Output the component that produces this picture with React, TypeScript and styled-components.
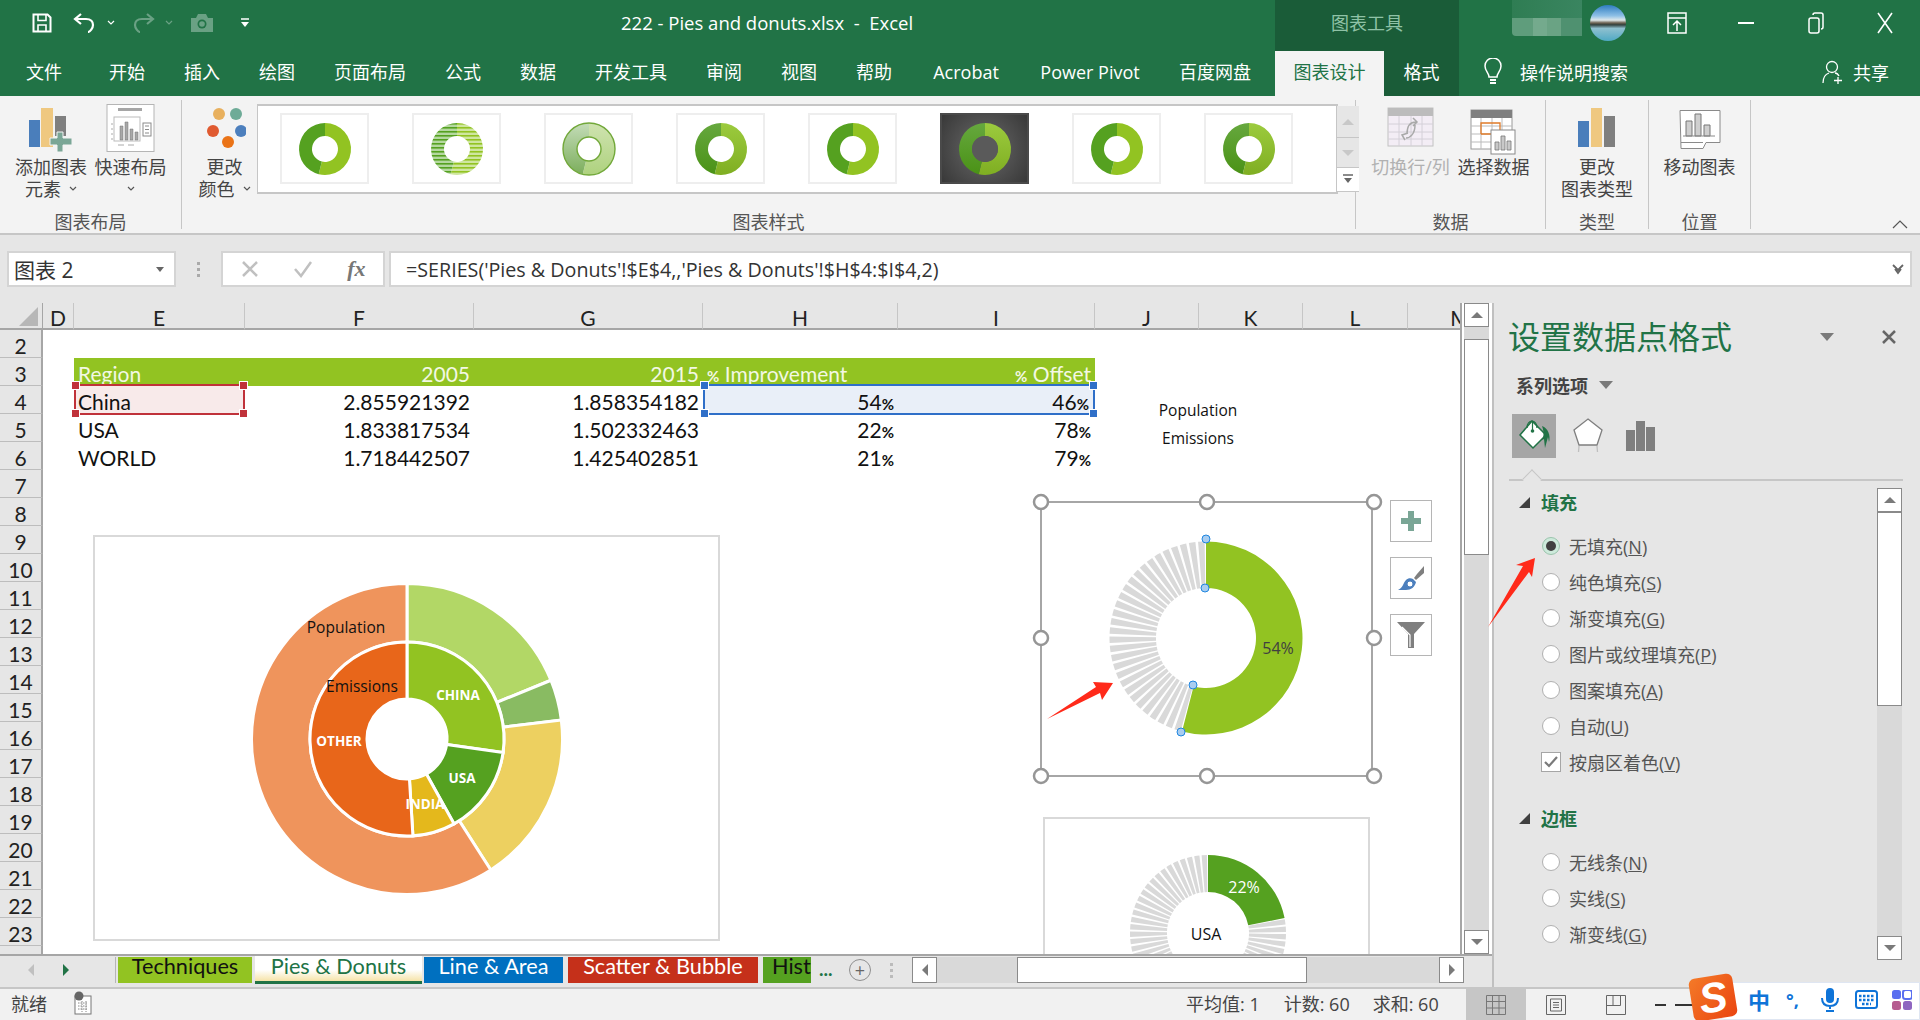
import React from "react";
import styled, {createGlobalStyle} from "styled-components";

const UI_FONT = `"Open Sans", "Noto Sans CJK SC", sans-serif`;
const SHEET_FONT = `Lato, "Noto Sans CJK SC", sans-serif`;
const GREEN = "#217346";

const polar = (cx: number, cy: number, r: number, a: number) => {
  const t = ((a - 90) * Math.PI) / 180;
  return [cx + r * Math.cos(t), cy + r * Math.sin(t)];
};

const arc = (cx: number, cy: number, r0: number, r1: number, a0: number, a1: number) => {
  const large = a1 - a0 > 180 ? 1 : 0;
  const [x0, y0] = polar(cx, cy, r1, a0);
  const [x1, y1] = polar(cx, cy, r1, a1);
  const [x2, y2] = polar(cx, cy, r0, a1);
  const [x3, y3] = polar(cx, cy, r0, a0);
  return `M${x0} ${y0}A${r1} ${r1} 0 ${large} 1 ${x1} ${y1}L${x2} ${y2}A${r0} ${r0} 0 ${large} 0 ${x3} ${y3}Z`;
};

const Stripes: React.FC<{cx: number; cy: number; r0: number; r1: number; start: number}> = ({cx, cy, r0, r1, start}) => {
  const count = Math.round((360 - start) / 5.5);
  const step = (360 - start) / count;
  return (
    <g fill="#d9d9d9">
      {Array.from({length: count}, (_, i) => (
        <path key={i} d={arc(cx, cy, r0, r1, start + i * step + 0.8, start + (i + 1) * step - 0.8)}/>
      ))}
    </g>
  );
};

/* ---------- ribbon thumbs ---------- */

type ThumbKind = "flat" | "lines" | "glass" | "shade" | "dark";

const thumbs: {id: string; kind: ThumbKind}[] = [
  {id: "a", kind: "flat"},
  {id: "b", kind: "lines"},
  {id: "c", kind: "glass"},
  {id: "d", kind: "shade"},
  {id: "e", kind: "flat"},
  {id: "f", kind: "dark"},
  {id: "g", kind: "flat"},
  {id: "h", kind: "shade"},
];

const ThumbDonut: React.FC<{id: string; kind: ThumbKind}> = ({id, kind}) => {
  const cx = 43;
  const cy = 34;
  const dark = kind === "dark";
  const light = kind === "glass" ? `url(#${id}l)` : kind === "lines" ? `url(#${id}pl)` : kind === "shade" || dark ? `url(#${id}l)` : "#92c322";
  const deep = kind === "glass" ? `url(#${id}d)` : kind === "lines" ? `url(#${id}pd)` : kind === "shade" || dark ? `url(#${id}d)` : "#55a120";
  return (
    <svg width="85" height="67" viewBox="0 0 85 67">
      <defs>
        <linearGradient id={`${id}l`} x1="0" y1="0" x2="0" y2="1">
          <stop offset="0" stopColor={kind === "glass" ? "#cfe3b0" : "#9ccb3e"}/>
          <stop offset="1" stopColor={kind === "glass" ? "#aed27e" : "#7fae22"}/>
        </linearGradient>
        <linearGradient id={`${id}d`} x1="0" y1="0" x2="0" y2="1">
          <stop offset="0" stopColor={kind === "glass" ? "#c4dcb8" : "#66a83e"}/>
          <stop offset="1" stopColor={kind === "glass" ? "#7cae5c" : "#4a9216"}/>
        </linearGradient>
        <pattern id={`${id}pl`} width="4" height="4" patternUnits="userSpaceOnUse">
          <rect width="4" height="4" fill="#cfe6a0"/>
          <rect width="4" height="1.6" fill="#92c322"/>
        </pattern>
        <pattern id={`${id}pd`} width="4" height="4" patternUnits="userSpaceOnUse">
          <rect width="4" height="4" fill="#b5d8a0"/>
          <rect width="4" height="1.6" fill="#55a120"/>
        </pattern>
      </defs>
      <path d={arc(cx, cy, kind === "glass" ? 12 : 13, 26, 0, 194)} fill={light}/>
      <path d={arc(cx, cy, kind === "glass" ? 12 : 13, 26, 194, 360)} fill={deep}/>
      {kind === "glass" && <circle cx={cx} cy={cy} r="26" fill="none" stroke="#72a83a" strokeWidth="1.4"/>}
      {kind === "glass" && <circle cx={cx} cy={cy} r="12" fill="none" stroke="#72a83a" strokeWidth="1.4"/>}
      {dark && <circle cx={cx} cy={cy} r="13" fill="#5a5a5a"/>}
    </svg>
  );
};

/* ---------- small icons ---------- */

const Chevron: React.FC<{color?: string}> = ({color = "#555"}) => (
  <svg width="8" height="6" viewBox="0 0 8 6"><path d="M1 1l3 3 3-3" fill="none" stroke={color} strokeWidth="1.2"/></svg>
);

const AddElementIcon = () => (
  <svg width="48" height="52" viewBox="0 0 48 52">
    <rect x="2" y="16" width="11" height="27" fill="#4a7ebb"/>
    <rect x="14" y="4" width="12" height="39" fill="#efc880"/>
    <rect x="28" y="12" width="11" height="20" fill="#7f7f7f"/>
    <path d="M30 28h6v6h9v7h-9v7h-6v-7h-7v-7h7z" fill="#7aa696" stroke="#f3f3f3"/>
  </svg>
);

const QuickLayoutIcon = () => (
  <svg width="50" height="52" viewBox="0 0 50 52">
    <rect x="1" y="0.5" width="47" height="47" fill="#fff" stroke="#b5b5b5"/>
    <rect x="12" y="4" width="24" height="3" fill="#a6a6a6"/>
    <rect x="8" y="13" width="26" height="24" fill="none" stroke="#bbb"/>
    <path d="M14 36V22h3v14zM19 36V18h3v18zM24 36V25h3v11zM29 36V28h3v8z" fill="#a8a8a8" stroke="#777" strokeWidth=".5"/>
    <rect x="37" y="19" width="8" height="13" fill="#fff" stroke="#8a8a8a"/>
    <path d="M39 22h4M39 25.500h4M39 29h4" stroke="#8a8a8a"/>
    <path d="M5 20h2M5 25h2M5 30h2M5 35h2M12 41h6M22 41h6" stroke="#aaa"/>
  </svg>
);

const PaletteIcon = () => (
  <svg width="42" height="52" viewBox="0 0 42 52">
    <circle cx="15" cy="10" r="6" fill="#e8b05e"/>
    <circle cx="32" cy="10" r="6" fill="#6eab97"/>
    <circle cx="9" cy="27" r="6" fill="#e05a30"/>
    <circle cx="37" cy="27" r="6" fill="#4c7fbd"/>
    <circle cx="24" cy="38" r="6" fill="#ea7317"/>
  </svg>
);

const SwitchIcon = () => (
  <svg width="48" height="52" viewBox="0 0 48 52">
    <rect x="1" y="4" width="45" height="38" fill="#f3edf5" stroke="#c2c2c2"/>
    <rect x="1" y="4" width="45" height="8" fill="#bcbcbc"/>
    <path d="M12 12v30M24 12v30M35 12v30M1 20h45M1 28h45M1 35h45" stroke="#d4d0d8"/>
    <path d="M20 30c0-9 4-12 9-12M26 14l4 4-4 4M28 21c0 9-5 13-9 13M21 29l-6 2 3 5" fill="none" stroke="#a9a9a9" strokeWidth="1.500"/>
  </svg>
);

const SelectDataIcon = () => (
  <svg width="48" height="52" viewBox="0 0 48 52">
    <rect x="1" y="6" width="41" height="39" fill="#fff" stroke="#9a9a9a"/>
    <rect x="1" y="6" width="41" height="8" fill="#7f7f7f"/>
    <path d="M11 14v31M22 14v31M32 14v31M1 22h41M1 30h41M1 38h41" stroke="#bbb"/>
    <path d="M11 30V19h19v11M11 30h11" fill="none" stroke="#e07b28" strokeWidth="1.300"/>
    <rect x="21" y="26" width="24" height="24" fill="#fff" stroke="#8a8a8a"/>
    <path d="M25 46V38h4v8zM31 46V32h4v14zM37 46V37h4v9z" fill="#c8c8c8" stroke="#777" strokeWidth=".8"/>
  </svg>
);

const ChangeTypeIcon = () => (
  <svg width="40" height="52" viewBox="0 0 40 52">
    <rect x="1" y="17" width="11" height="26" fill="#4a7ebb"/>
    <rect x="14" y="4" width="11" height="39" fill="#efc880"/>
    <rect x="27" y="12" width="11" height="31" fill="#7f7f7f"/>
  </svg>
);

const MoveChartIcon = () => (
  <svg width="44" height="52" viewBox="0 0 44 52">
    <path d="M2 6.500h40v32H28l-3 6H3z" fill="#fff" stroke="#8a8a8a"/>
    <path d="M3 38.500h22" stroke="#8a8a8a"/>
    <path d="M8 32V17h6v15zM17 32V10h6v22zM26 32V21h6v11z" fill="#cfcfcf" stroke="#777"/>
    <path d="M5 32h32" stroke="#8a8a8a"/>
  </svg>
);

const BucketIcon = () => (
  <svg width="34" height="36" viewBox="0 0 34 36">
    <path d="M15 3l14 14-13 13L3 17z" fill="#fff" stroke={GREEN} strokeWidth="1.500"/>
    <path d="M10 10c0-9 10-9 10 0v0" fill="none" stroke={GREEN} strokeWidth="1.300"/>
    <path d="M15.500 4v8" stroke={GREEN} strokeWidth="1.200"/>
    <circle cx="15.500" cy="13" r="1.800" fill={GREEN}/>
    <path d="M25 8c6 2 9 10 7 16l-1-5-3 11-1-9-2 1c2-3 2-9 0-14z" fill={GREEN}/>
  </svg>
);

const PentagonIcon = () => (
  <svg width="32" height="38" viewBox="0 0 32 38">
    <path d="M16 2l14 11-5 15H7L2 13z" fill="#fff" stroke="#7f7f7f" strokeWidth="1.300"/>
    <path d="M7 29l-.5 6M25 29l.5 6" stroke="#bfbfbf" strokeWidth="1.300"/>
  </svg>
);

const BarsIcon = () => (
  <svg width="30" height="32" viewBox="0 0 30 32">
    <path d="M0 10h9v21H0zM10 1h9v30h-9zM20 7h9v24h-9z" fill="#7f7f7f"/>
  </svg>
);

/* ---------- page ---------- */

const GlobalStyle = createGlobalStyle`
  html, body {
    margin: 0;
    padding: 0;
    background: #fff;
    overflow: hidden;
  }
  * { box-sizing: border-box; }
`;

const Window = styled.div`
  position: relative;
  width: 1920px;
  height: 1020px;
  display: flex;
  flex-direction: column;
  overflow: hidden;
  font-family: ${UI_FONT};
  font-size: 18px;
  color: #444;
`;

const TitleBar = styled.header`
  height: 51px;
  flex: none;
  display: flex;
  align-items: stretch;
  background: ${GREEN};
  color: #fff;
`;

const QuickAccess = styled.div`
  width: 621px;
  flex: none;
  display: flex;
  align-items: center;
  padding: 0 0 5px 32px;
`;

const QatItem = styled.span<{$ml?: number}>`
  display: flex;
  margin-left: ${({$ml}) => $ml ?? 0}px;
`;

const DocTitle = styled.div`
  width: 654px;
  flex: none;
  font-size: 18.500px;
  line-height: 46px;
  white-space: pre;
`;

const ToolsLabel = styled.div`
  width: 184px;
  flex: none;
  background: #1a5c38;
  color: #8fc2a6;
  text-align: center;
  line-height: 47px;
`;

const BlurredName = styled.div`
  width: 70px;
  height: 36px;
  margin-left: 53px;
  flex: none;
  border-radius: 0 0 0 4px;
  background:
    linear-gradient(90deg, #5f9d7c 0 30%, #74aa8d 30% 50%, #6aa384 50% 70%, #4f9170 70% 100%) bottom / 100% 50% no-repeat,
    linear-gradient(90deg, #2f7d53, #3a8560);
`;

const Avatar = styled.div`
  width: 36px;
  height: 36px;
  margin: 5px 0 0 8px;
  flex: none;
  border-radius: 50%;
  background: linear-gradient(180deg, #2d7cc0 0%, #8ec0e6 30%, #dfe8ea 42%, #6b5f4e 50%, #33423f 55%, #8fc0cf 65%, #4fa9c4 100%);
`;

const WindowControls = styled.div`
  display: flex;
  flex: none;
  margin-left: 16px;
  padding-bottom: 5px;
`;

const WinButton = styled.span`
  width: 69.500px;
  flex: none;
  display: flex;
  align-items: center;
  justify-content: center;
`;

const TabBar = styled.nav`
  height: 45px;
  flex: none;
  display: flex;
  align-items: stretch;
  background: ${GREEN};
  color: #fff;
  padding-left: 6.500px;
`;

const Tab = styled.div<{$w: number; $gap?: number; $active?: boolean; $tool?: boolean}>`
  width: ${({$w}) => $w}px;
  margin-right: ${({$gap}) => $gap ?? 0}px;
  flex: none;
  text-align: center;
  line-height: 42px;
  white-space: nowrap;
  background: ${({$active, $tool}) => ($active ? "#f3f3f3" : $tool ? "#1a5c38" : "transparent")};
  color: ${({$active}) => ($active ? GREEN : "#fff")};
`;

const TellMe = styled.div`
  display: flex;
  align-items: center;
  gap: 18px;
  margin-left: 25px;
  padding-bottom: 3px;
`;

const ShareBox = styled.div`
  display: flex;
  align-items: center;
  gap: 9px;
  margin-left: 194px;
  padding-bottom: 3px;
`;

const Ribbon = styled.section`
  height: 139px;
  flex: none;
  display: flex;
  background: #f3f3f3;
  border-bottom: 2px solid #c6c6c6;
  color: #444;
`;

const Group = styled.div<{$w: number}>`
  width: ${({$w}) => $w}px;
  height: 129px;
  margin-top: 4px;
  flex: none;
  display: flex;
  flex-direction: column;
  border-right: 1px solid #c6c6c6;
`;

const GroupBody = styled.div<{$pl?: number}>`
  flex: 1;
  min-height: 0;
  display: flex;
  padding: 4px 0 0 ${({$pl}) => $pl ?? 0}px;
`;

const GroupLabel = styled.div`
  height: 24px;
  margin-bottom: -5px;
  line-height: 24px;
  text-align: center;
  color: #555;
`;

const RibbonButton = styled.div<{$w: number; $muted?: boolean}>`
  width: ${({$w}) => $w}px;
  flex: none;
  display: flex;
  flex-direction: column;
  align-items: center;
  line-height: 22px;
  white-space: nowrap;
  color: ${({$muted}) => ($muted ? "#b1b1b1" : "#444")};
`;

const IconSlot = styled.div`
  height: 52px;
  display: flex;
  justify-content: center;
`;

const ButtonLine = styled.div`
  height: 22px;
  display: flex;
  align-items: center;
  gap: 8px;
`;

const Gallery = styled.div`
  width: 1081px;
  height: 90px;
  flex: none;
  display: flex;
  padding: 7px 0 0 22px;
  background: #fff;
  border: 1px solid #c6c6c6;
  border-width: 2px 2px 2px 1px;
`;

const Thumb = styled.div<{$dark?: boolean}>`
  width: 89px;
  height: 71px;
  margin-right: 43px;
  flex: none;
  display: flex;
  align-items: center;
  justify-content: center;
  border: 2px solid ${({$dark}) => ($dark ? "#4a4a4a" : "#eeeeee")};
  background: ${({$dark}) => ($dark ? "radial-gradient(circle, #6a6a6a, #383838)" : "#fff")};
`;

const GalleryScroll = styled.div`
  margin: -7px -1px 0 auto;
  width: 23px;
  flex: none;
  display: flex;
  flex-direction: column;
  border-left: 1px solid #c6c6c6;
`;

const GalleryStep = styled.div<{$h: number; $off?: boolean}>`
  height: ${({$h}) => $h}px;
  display: flex;
  align-items: center;
  justify-content: center;
  background: ${({$off}) => ($off ? "#e6e6e6" : "#fff")};
  border-bottom: 1px solid #c6c6c6;
  color: ${({$off}) => ($off ? "#bdbdbd" : "#666")};
`;

const Collapse = styled.div`
  flex: 1;
  display: flex;
  justify-content: flex-end;
  align-items: flex-end;
  padding: 0 12px 4px 0;
`;

const FormulaBar = styled.div`
  height: 68px;
  flex: none;
  display: flex;
  align-items: flex-start;
  padding: 16px 8px 0 7px;
  background: #e6e6e6;
`;

const InputBox = styled.div<{$w?: number; $ml?: number}>`
  width: ${({$w}) => ($w ? `${$w}px` : "auto")};
  flex: ${({$w}) => ($w ? "none" : "1")};
  margin-left: ${({$ml}) => $ml ?? 0}px;
  height: 36px;
  display: flex;
  align-items: center;
  background: #fff;
  border: 2px solid #d4d4d4;
  svg { flex: none; }
`;

const NameText = styled.span`
  flex: 1;
  padding-left: 5px;
  font-size: 21px;
  color: #333;
`;

const NameCaret = styled.svg`
  margin-right: 10px;
`;

const Grip = styled.div`
  width: 45px;
  height: 36px;
  flex: none;
  display: flex;
  flex-direction: column;
  align-items: center;
  justify-content: center;
  gap: 3px;
  span {
    width: 3px;
    height: 3px;
    background: #aaa;
  }
`;

const FxSlot = styled.span<{$w: number}>`
  width: ${({$w}) => $w}px;
  display: flex;
  justify-content: center;
`;

const FxLabel = styled.span`
  font-family: "Liberation Serif", serif;
  font-style: italic;
  font-weight: 700;
  font-size: 22px;
  color: #777;
`;

const FormulaText = styled.span`
  flex: 1;
  padding-left: 15px;
  font-size: 19.700px;
  color: #333;
  white-space: pre;
`;

const FormulaCaret = styled.svg`
  margin-right: 6px;
`;

const Main = styled.div`
  height: 684px;
  flex: none;
  display: flex;
`;

const SheetColumn = styled.div`
  width: 1492px;
  flex: none;
  display: flex;
  flex-direction: column;
`;

const SheetRow = styled.div`
  flex: 1;
  min-height: 0;
  display: flex;
`;

const Sheet = styled.div`
  position: relative;
  width: 1462px;
  flex: none;
  overflow: hidden;
  background: #fff;
  border-right: 2px solid #a6a6a6;
`;

const Grid = styled.div`
  display: grid;
  grid-template-columns: 43px 31px 171px 229px 229px 195px 197px 104px 104px 105px 105px;
  grid-template-rows: 27px;
  grid-auto-rows: 28px;
  font-family: ${SHEET_FONT};
  font-size: 21px;
  color: #111;
`;

const Corner = styled.div`
  position: relative;
  background: #e6e6e6;
  border-right: 1px solid #a6a6a6;
  border-bottom: 2px solid #a6a6a6;
  &::after {
    content: "";
    position: absolute;
    right: 4px;
    bottom: 2px;
    border-style: solid;
    border-width: 0 0 19px 19px;
    border-color: transparent transparent #b7b7b7 transparent;
  }
`;

const ColHead = styled.div`
  background: #e6e6e6;
  border-right: 1px solid #c6c6c6;
  border-bottom: 2px solid #a6a6a6;
  text-align: center;
  line-height: 27px;
  color: #222;
  padding-top: 1px;
`;

const RowHead = styled.div`
  background: #e6e6e6;
  border-right: 2px solid #a6a6a6;
  border-bottom: 1px solid #bdbdbd;
  text-align: center;
  line-height: 32px;
  color: #222;
`;

type Frame = "all" | "start" | "end";

const Cell = styled.div<{$align?: "left" | "right"; $head?: boolean; $frame?: Frame; $tint?: string; $line?: string}>`
  position: relative;
  padding: ${({$head}) => ($head ? "2px" : "0")} 4px 0;
  line-height: ${({$head}) => ($head ? 28 : 31)}px;
  white-space: nowrap;
  text-align: ${({$align}) => $align ?? "left"};
  color: ${({$head}) => ($head ? "#f3f8e4" : "inherit")};
  background: ${({$head, $tint}) => ($head ? "#92c322" : $tint ?? "transparent")};
  ${({$frame, $line}) => $frame && `
    border-top: 2px solid ${$line};
    border-bottom: 2px solid ${$line};
    margin-top: -2px;
    height: 31px;
    line-height: 32px;
    padding-left: ${$frame === "all" ? 2 : 4}px;
    border-left: ${$frame !== "end" ? `2px solid ${$line}` : "0"};
    border-right: ${$frame !== "start" ? `2px solid ${$line}` : "0"};
  `}
`;

const Corners = styled.i<{$x: "left" | "right"; $y: "top" | "bottom"; $c: string}>`
  position: absolute;
  ${({$x}) => $x}: -4px;
  ${({$y}) => $y}: -4px;
  width: 7px;
  height: 7px;
  background: ${({$c}) => $c};
  box-shadow: 0 0 0 1px #fff;
  z-index: 2;
`;

const TinyPct = styled.span`
  font-size: 15px;
  font-weight: 700;
`;

const ChartFrame = styled.div<{$x: number; $y: number; $w: number; $h: number; $line: string}>`
  position: absolute;
  left: ${({$x}) => $x}px;
  top: ${({$y}) => $y}px;
  width: ${({$w}) => $w}px;
  height: ${({$h}) => $h}px;
  background: #fff;
  border: 2px solid ${({$line}) => $line};
  svg {
    position: absolute;
    left: 0;
    top: 0;
    overflow: visible;
    font-family: ${UI_FONT};
  }
`;

const FloatLabel = styled.div<{$y: number}>`
  position: absolute;
  left: 1120px;
  top: ${({$y}) => $y}px;
  width: 156px;
  text-align: center;
  font-size: 15.500px;
  line-height: 20px;
  color: #111;
`;

const ChartTool = styled.div<{$y: number}>`
  position: absolute;
  left: 1390px;
  top: ${({$y}) => $y}px;
  width: 42px;
  height: 42px;
  display: flex;
  align-items: center;
  justify-content: center;
  background: #fff;
  border: 1px solid #b5b5b5;
`;

const VScroll = styled.div<{$w: number; $ml?: number}>`
  width: ${({$w}) => $w}px;
  margin-left: ${({$ml}) => $ml ?? 0}px;
  flex: none;
  display: flex;
  flex-direction: column;
  background: #d9d9d9;
`;

const ScrollBtn = styled.div`
  height: 24px;
  flex: none;
  display: flex;
  align-items: center;
  justify-content: center;
  background: #fff;
  border: 1px solid #8a8a8a;
`;

const ScrollThumb = styled.div<{$h: number; $mt: number}>`
  height: ${({$h}) => $h}px;
  margin-top: ${({$mt}) => $mt}px;
  flex: none;
  background: #fff;
  border: 1px solid #8a8a8a;
`;

const Spacer = styled.div`
  flex: 1;
`;

const Arrow = styled.i<{$dir: "up" | "down" | "left" | "right"; $c?: string; $big?: boolean}>`
  width: 0;
  height: 0;
  flex: none;
  border-style: solid;
  ${({$dir, $c = "#7a7a7a", $big}) => {
    const s = $big ? 7 : 6;
    const t = $big ? 8 : 6;
    return $dir === "up" ? `border-width: 0 ${s}px ${t}px ${s}px; border-color: transparent transparent ${$c} transparent;`
      : $dir === "down" ? `border-width: ${t}px ${s}px 0 ${s}px; border-color: ${$c} transparent transparent transparent;`
      : $dir === "left" ? `border-width: ${s}px ${t}px ${s}px 0; border-color: transparent ${$c} transparent transparent;`
      : `border-width: ${s}px 0 ${s}px ${t}px; border-color: transparent transparent transparent ${$c};`;
  }}
`;

const TabStrip = styled.div`
  height: 33px;
  flex: none;
  display: flex;
  align-items: flex-start;
  padding-top: 1px;
  background: #e6e6e6;
  border-top: 2px solid #a6a6a6;
  font-family: ${SHEET_FONT};
  font-size: 21.700px;
`;

const SheetNav = styled.div`
  width: 116px;
  height: 26px;
  flex: none;
  display: flex;
  align-items: center;
  gap: 29px;
  padding-left: 28px;
  border-right: 1px solid #b5b5b5;
`;

const SheetTab = styled.div<{$w: number; $bg: string; $fg: string; $ml: number; $active?: boolean; $pl?: number}>`
  width: ${({$w}) => $w}px;
  margin-left: ${({$ml}) => $ml}px;
  height: ${({$active}) => ($active ? 28 : 26)}px;
  margin-top: ${({$active}) => ($active ? -1 : 0)}px;
  padding-left: ${({$pl}) => $pl ?? 0}px;
  flex: none;
  text-align: ${({$pl}) => ($pl ? "left" : "center")};
  line-height: ${({$active}) => ($active ? 20 : 18)}px;
  white-space: nowrap;
  background: ${({$bg}) => $bg};
  color: ${({$fg}) => $fg};
  ${({$active}) => $active && `border-bottom: 3px solid ${GREEN};`}
`;

const More = styled.span`
  margin-left: 8px;
  width: 24px;
  font-size: 19px;
  font-weight: 700;
  line-height: 24px;
  color: ${GREEN};
  flex: none;
`;

const AddSheet = styled.span`
  width: 22px;
  height: 22px;
  margin: 2px 0 0 6px;
  border-radius: 50%;
  border: 1.500px solid #8f8f8f;
  flex: none;
  display: flex;
  align-items: center;
  justify-content: center;
  font-family: ${UI_FONT};
  font-size: 18px;
  line-height: 1;
  color: #666;
`;

const StripGrip = styled(Grip)`
  width: 41px;
  height: 26px;
  span { background: #bbb; }
`;

const HScroll = styled.div`
  width: 552px;
  height: 26px;
  flex: none;
  display: flex;
  background: #d9d9d9;
`;

const HBtn = styled.div`
  width: 25px;
  flex: none;
  display: flex;
  align-items: center;
  justify-content: center;
  background: #fff;
  border: 1px solid #8a8a8a;
`;

const HThumb = styled.div`
  width: 290px;
  margin-left: 80px;
  background: #fff;
  border: 1px solid #8a8a8a;
`;

const Pane = styled.aside`
  width: 428px;
  flex: none;
  display: flex;
  flex-direction: column;
  padding-left: 14px;
  background: #e6e6e6;
  border-left: 2px solid #c0c0c0;
`;

const PaneHead = styled.div`
  height: 68px;
  flex: none;
  display: flex;
  align-items: center;
`;

const PaneTitle = styled.h2`
  width: 312px;
  margin: 0;
  font-size: 32px;
  font-weight: 400;
  line-height: 68px;
  color: ${GREEN};
`;

const PaneClose = styled.span`
  margin-left: 48px;
  display: flex;
`;

const SeriesRow = styled.div`
  height: 30px;
  margin-top: -1px;
  flex: none;
  display: flex;
  align-items: center;
  gap: 11px;
  padding-left: 8px;
  font-weight: 700;
  color: #444;
`;

const PaneIcons = styled.div`
  height: 44px;
  margin: 14px 0 0 4px;
  flex: none;
  display: flex;
  align-items: center;
`;

const PaneIcon = styled.div<{$on?: boolean; $w: number}>`
  width: ${({$w}) => $w}px;
  height: 44px;
  flex: none;
  display: flex;
  align-items: center;
  justify-content: center;
  background: ${({$on}) => ($on ? "#a6a6a6" : "transparent")};
`;

const PaneRule = styled.div`
  position: relative;
  width: 394px;
  height: 2px;
  margin: 21px 0 0 1px;
  flex: none;
  background: #c6c6c6;
  &::before {
    content: "";
    position: absolute;
    left: 16px;
    bottom: -1px;
    width: 13px;
    height: 13px;
    background: #e6e6e6;
    border-top: 1.500px solid #c6c6c6;
    border-left: 1.500px solid #c6c6c6;
    transform: rotate(45deg) translate(3px, 3px);
  }
`;

const PaneBody = styled.div`
  height: 472px;
  margin-top: 7px;
  flex: none;
  display: flex;
`;

const Options = styled.div`
  width: 369px;
  margin-top: -1px;
  flex: none;
`;

const Section = styled.div<{$mt?: number}>`
  height: 30px;
  margin-top: ${({$mt}) => $mt ?? 0}px;
  display: flex;
  align-items: center;
  gap: 11px;
  padding-left: 11px;
  font-weight: 700;
  color: ${GREEN};
  &::before {
    content: "";
    border-style: solid;
    border-width: 0 0 11px 11px;
    border-color: transparent transparent #404040 transparent;
  }
`;

const OptionList = styled.div`
  margin-top: 11px;
`;

const Option = styled.div`
  height: 36px;
  display: flex;
  align-items: center;
  gap: 9px;
  padding-left: 34px;
  color: #555;
  white-space: nowrap;
`;

const Radio = styled.span<{$on?: boolean}>`
  width: 18px;
  height: 18px;
  flex: none;
  display: flex;
  align-items: center;
  justify-content: center;
  border-radius: 50%;
  background: ${({$on}) => ($on ? "#cdeadb" : "#fff")};
  border: 1px solid ${({$on}) => ($on ? "#9bc4ad" : "#b0b0b0")};
  &::after {
    content: "";
    width: 10px;
    height: 10px;
    border-radius: 50%;
    background: ${({$on}) => ($on ? "#404040" : "transparent")};
  }
`;

const Check = styled.span`
  width: 20px;
  height: 20px;
  margin: 0 -1px;
  flex: none;
  display: flex;
  align-items: center;
  justify-content: center;
  background: #fff;
  border: 1px solid #a6a6a6;
`;

const StatusBar = styled.footer`
  height: 33px;
  flex: none;
  display: flex;
  align-items: center;
  padding: 0 0 4px 11px;
  background: #f1f1f1;
  border-top: 2px solid #c6c6c6;
  color: #444;
  white-space: nowrap;
`;

const StatusIcon = styled.span`
  margin-left: 26px;
  display: flex;
`;

const Stat = styled.span<{$ml: number}>`
  margin-left: ${({$ml}) => $ml}px;
`;

const ViewBtn = styled.span<{$on?: boolean}>`
  width: 60px;
  height: 31px;
  flex: none;
  display: flex;
  align-items: center;
  justify-content: center;
  background: ${({$on}) => ($on ? "#c6c6c6" : "transparent")};
`;

const ViewGroup = styled.div`
  position: absolute;
  left: 1466px;
  bottom: 0;
  display: flex;
`;

const ZoomDash = styled.span<{$w: number; $ml: number}>`
  width: ${({$w}) => $w}px;
  height: 2px;
  margin-left: ${({$ml}) => $ml}px;
  align-self: center;
  background: #333;
  flex: none;
`;

const Ime = styled.div`
  position: absolute;
  right: 0;
  bottom: 0;
  width: 200px;
  height: 38px;
  display: flex;
  align-items: center;
  padding: 0 0 3px 27px;
  background: #fff;
  border: 1px solid #dfe6f2;
  border-radius: 4px 0 0 4px;
  color: #0f74d8;
`;

const SogouLogo = styled.div`
  position: absolute;
  left: -30px;
  top: -7px;
  width: 44px;
  height: 43px;
  transform: rotate(-9deg);
  border-radius: 6px;
  background: linear-gradient(135deg, #f47a28, #ea4510);
  color: #fff;
  font-family: "Liberation Sans", sans-serif;
  font-style: italic;
  font-weight: 700;
  font-size: 42px;
  line-height: 43px;
  text-align: center;
`;

const ImeZh = styled.span`
  font-size: 22px;
  font-weight: 700;
  line-height: 1;
  width: 38px;
`;

const ImePunct = styled.span`
  width: 35px;
  font-size: 18px;
  font-weight: 700;
  line-height: 1;
`;

const ImeIcon = styled.span<{$w: number}>`
  width: ${({$w}) => $w}px;
  display: flex;
  flex: none;
`;

const Annotation = styled.svg`
  position: absolute;
  left: 0;
  top: 0;
  width: 1920px;
  height: 1020px;
  pointer-events: none;
`;

/* ---------- data ---------- */

const columns = ["D", "E", "F", "G", "H", "I", "J", "K", "L", "M"];

const sheetRows = Array.from({length: 23}, (_, i) => i + 2);

const dataRows: {[row: number]: {name: string; a: string; b: string; c: string; d: string}} = {
  4: {name: "China", a: "2.855921392", b: "1.858354182", c: "54", d: "46"},
  5: {name: "USA", a: "1.833817534", b: "1.502332463", c: "22", d: "78"},
  6: {name: "WORLD", a: "1.718442507", b: "1.425402851", c: "21", d: "79"},
};

const fillOptions: [string, string, boolean?][] = [
  ["无填充", "N", true],
  ["纯色填充", "S"],
  ["渐变填充", "G"],
  ["图片或纹理填充", "P"],
  ["图案填充", "A"],
  ["自动", "U"],
];

const lineOptions: [string, string][] = [
  ["无线条", "N"],
  ["实线", "S"],
  ["渐变线", "G"],
];

const menuTabs: [string, number, number?][] = [
  ["文件", 75, 8],
  ["开始", 75],
  ["插入", 75],
  ["绘图", 75],
  ["页面布局", 111],
  ["公式", 75],
  ["数据", 75],
  ["开发工具", 111],
  ["审阅", 75],
  ["视图", 75],
  ["帮助", 75],
  ["Acrobat", 109],
  ["Power Pivot", 139],
  ["百度网盘", 111, 4.5],
];

const Handles: React.FC<{c: string; left?: boolean; right?: boolean}> = ({c, left, right}) => (
  <>
    {left && <Corners $x="left" $y="top" $c={c}/>}
    {left && <Corners $x="left" $y="bottom" $c={c}/>}
    {right && <Corners $x="right" $y="top" $c={c}/>}
    {right && <Corners $x="right" $y="bottom" $c={c}/>}
  </>
);

const SheetCells: React.FC<{row: number}> = ({row}) => {
  const data = dataRows[row];
  if (row === 3) {
    return (
      <>
        <Cell/>
        <Cell $head>Region</Cell>
        <Cell $head $align="right">2005</Cell>
        <Cell $head $align="right">2015</Cell>
        <Cell $head><TinyPct>%</TinyPct> Improvement</Cell>
        <Cell $head $align="right"><TinyPct>%</TinyPct> Offset</Cell>
        <Cell/><Cell/><Cell/><Cell/>
      </>
    );
  }
  if (data) {
    const china = row === 4;
    return (
      <>
        <Cell/>
        <Cell $frame={china ? "all" : undefined} $line="#c0323a" $tint={china ? "#f8eaea" : undefined}>
          {data.name}
          {china && <Handles c="#c0323a" left right/>}
        </Cell>
        <Cell $align="right">{data.a}</Cell>
        <Cell $align="right">{data.b}</Cell>
        <Cell $align="right" $frame={china ? "start" : undefined} $line="#2f6fc8" $tint={china ? "#e9eff8" : undefined}>
          {data.c}<TinyPct>%</TinyPct>
          {china && <Handles c="#2f6fc8" left/>}
        </Cell>
        <Cell $align="right" $frame={china ? "end" : undefined} $line="#2f6fc8" $tint={china ? "#e9eff8" : undefined}>
          {data.d}<TinyPct>%</TinyPct>
          {china && <Handles c="#2f6fc8" right/>}
        </Cell>
        <Cell/><Cell/><Cell/><Cell/>
      </>
    );
  }
  return <>{columns.map((c) => <Cell key={c}/>)}</>;
};

const PieChart = () => {
  const cx = 312;
  const cy = 202;
  const ring = (r0: number, r1: number, slices: [number, number, string][]) =>
    slices.map(([a0, a1, fill]) => (
      <path key={a0} d={arc(cx, cy, r0, r1, a0, a1)} fill={fill} stroke="#fff" strokeWidth="3"/>
    ));
  return (
    <ChartFrame $x={93} $y={232} $w={627} $h={406} $line="#d9d9d9">
      <svg width="622" height="402" viewBox="0 0 622 402">
        {ring(97, 155.500, [
          [0, 67.8, "#b2d766"],
          [67.8, 83, "#89bb62"],
          [83, 147.4, "#edd060"],
          [147.4, 360, "#ef945c"],
        ])}
        {ring(40, 97, [
          [0, 98, "#92c322"],
          [98, 151, "#55a120"],
          [151, 176.5, "#e4b81c"],
          [176.5, 360, "#e8661a"],
        ])}
        <text x="251" y="96" textAnchor="middle" fontSize="15.500" fill="#111">Population</text>
        <text x="267" y="155" textAnchor="middle" fontSize="15.500" fill="#111">Emissions</text>
        <g fontSize="13.500" fontWeight="700" fill="#fff" textAnchor="middle">
          <text x="363" y="163">CHINA</text>
          <text x="244" y="209">OTHER</text>
          <text x="367" y="246">USA</text>
          <text x="330" y="272">INDIA</text>
        </g>
      </svg>
    </ChartFrame>
  );
};

const SelectedDonut = () => {
  const cx = 164;
  const cy = 135;
  const box = [[-1, -1], [165, -1], [332, -1], [-1, 135], [332, 135], [-1, 273], [165, 273], [332, 273]];
  const points = [[164, 36], [163, 85], [151, 182], [139, 229]];
  return (
    <ChartFrame $x={1040} $y={198} $w={333} $h={276} $line="#a6a6a6">
      <svg width="329" height="272" viewBox="0 0 329 272">
        <Stripes cx={cx} cy={cy} r0={50} r1={96.500} start={194.400}/>
        <path d={arc(cx, cy, 50, 96.500, 0, 194.400)} fill="#92c322"/>
        <text x="236" y="151" textAnchor="middle" fontSize="16" fill="#404040">54%</text>
        {points.map(([x, y]) => (
          <circle key={y} cx={x} cy={y} r="4" fill="#a9cdf0" stroke="#1f86e0" strokeWidth="1"/>
        ))}
        {box.map(([x, y]) => (
          <circle key={`${x}-${y}`} cx={x} cy={y} r="7" fill="#fff" stroke="#969696" strokeWidth="2.500"/>
        ))}
      </svg>
    </ChartFrame>
  );
};

const UsaDonut = () => {
  const cx = 163;
  const cy = 114;
  return (
    <ChartFrame $x={1043} $y={514} $w={327} $h={300} $line="#d9d9d9">
      <svg width="323" height="296" viewBox="0 0 323 296">
        <Stripes cx={cx} cy={cy} r0={41} r1={78} start={79}/>
        <path d={arc(cx, cy, 41, 78, 0, 79)} fill="#55a120"/>
        <text x="199" y="74" textAnchor="middle" fontSize="16" fill="#fff">22%</text>
        <text x="161" y="121" textAnchor="middle" fontSize="16" fill="#111">USA</text>
      </svg>
    </ChartFrame>
  );
};

export default function App() {
  return (
    <Window>
      <GlobalStyle/>

      <TitleBar>
        <QuickAccess>
          <QatItem>
            <svg width="20" height="20" viewBox="0 0 20 20">
              <path d="M1.500 1.500h14l3 3v14h-17z" fill="none" stroke="#fff" strokeWidth="2"/>
              <path d="M6 1.500v6h8v-6M6 18v-6h8v6" fill="none" stroke="#fff" strokeWidth="1.600"/>
            </svg>
          </QatItem>
          <QatItem $ml={21}>
            <svg width="23" height="20" viewBox="0 0 23 20">
              <path d="M8 1L2 6l6 5M2 6h11c5 0 7 3 7 6s-3 7-5 7" fill="none" stroke="#fff" strokeWidth="2.200"/>
            </svg>
          </QatItem>
          <QatItem $ml={11}><Chevron color="#fff"/></QatItem>
          <QatItem $ml={17}>
            <svg width="23" height="20" viewBox="0 0 23 20">
              <path d="M15 1l6 5-6 5M21 6H10C5 6 3 9 3 12s3 7 5 7" fill="none" stroke="#6aa184" strokeWidth="2.200"/>
            </svg>
          </QatItem>
          <QatItem $ml={10}><Chevron color="#6aa184"/></QatItem>
          <QatItem $ml={18}>
            <svg width="22" height="18" viewBox="0 0 22 18">
              <path d="M0 4h5l2-4h8l2 4h5v14H0z" fill="#6aa184"/>
              <circle cx="11" cy="10" r="4.500" fill="#217346"/>
              <circle cx="11" cy="10" r="2.800" fill="#6aa184"/>
            </svg>
          </QatItem>
          <QatItem $ml={28}>
            <svg width="8" height="10" viewBox="0 0 8 10">
              <path d="M0 1h8" stroke="#fff" strokeWidth="1.500"/>
              <path d="M0 4h8L4 9z" fill="#fff"/>
            </svg>
          </QatItem>
        </QuickAccess>
        <DocTitle>222 - Pies and donuts.xlsx  -  Excel</DocTitle>
        <ToolsLabel>图表工具</ToolsLabel>
        <BlurredName/>
        <Avatar/>
        <WindowControls>
          <WinButton>
            <svg width="20" height="22" viewBox="0 0 20 22">
              <path d="M1 1h18v20H1zM1 6h18" fill="none" stroke="#fff" strokeWidth="1.500"/>
              <path d="M10 19V9M6 13l4-4 4 4" fill="none" stroke="#fff" strokeWidth="1.500"/>
            </svg>
          </WinButton>
          <WinButton>
            <svg width="16" height="2" viewBox="0 0 16 2"><path d="M0 1h16" stroke="#fff" strokeWidth="2"/></svg>
          </WinButton>
          <WinButton>
            <svg width="16" height="22" viewBox="0 0 16 22">
              <rect x="1" y="6" width="10" height="15" rx="2" fill="none" stroke="#fff" strokeWidth="1.500"/>
              <path d="M5 3c0-1 1-2 2-2h6c1 0 2 1 2 2v12c0 1-1 2-2 2" fill="none" stroke="#fff" strokeWidth="1.500"/>
            </svg>
          </WinButton>
          <WinButton>
            <svg width="16" height="22" viewBox="0 0 16 22"><path d="M1 1l14 20M15 1L1 21" stroke="#fff" strokeWidth="1.600"/></svg>
          </WinButton>
        </WindowControls>
      </TitleBar>

      <TabBar>
        {menuTabs.map(([label, w, gap]) => (
          <Tab key={label} $w={w} $gap={gap}>{label}</Tab>
        ))}
        <Tab $w={109} $active>图表设计</Tab>
        <Tab $w={75} $tool>格式</Tab>
        <TellMe>
          <svg width="18" height="28" viewBox="0 0 18 28">
            <path d="M5 19c0-4-4-6-4-11a8 8 0 0116 0c0 5-4 7-4 11z" fill="none" stroke="#fff" strokeWidth="1.500"/>
            <path d="M6 22h6M6 25h6" stroke="#fff" strokeWidth="2"/>
          </svg>
          <span>操作说明搜索</span>
        </TellMe>
        <ShareBox>
          <svg width="22" height="24" viewBox="0 0 22 24">
            <circle cx="10" cy="7" r="5.500" fill="none" stroke="#fff" strokeWidth="1.300"/>
            <path d="M1 23c0-6 3-9 6-10M13 13c1 0 3 1 4 3M16 17v7M12 20.500h8" fill="none" stroke="#fff" strokeWidth="1.300"/>
          </svg>
          <span>共享</span>
        </ShareBox>
      </TabBar>

      <Ribbon>
        <Group $w={182}>
          <GroupBody $pl={11}>
            <RibbonButton $w={80}>
              <IconSlot><AddElementIcon/></IconSlot>
              <ButtonLine>添加图表</ButtonLine>
              <ButtonLine>元素<Chevron/></ButtonLine>
            </RibbonButton>
            <RibbonButton $w={79}>
              <IconSlot><QuickLayoutIcon/></IconSlot>
              <ButtonLine>快速布局</ButtonLine>
              <ButtonLine><Chevron/></ButtonLine>
            </RibbonButton>
          </GroupBody>
          <GroupLabel>图表布局</GroupLabel>
        </Group>

        <Group $w={1174}>
          <GroupBody $pl={10}>
            <RibbonButton $w={65}>
              <IconSlot><PaletteIcon/></IconSlot>
              <ButtonLine>更改</ButtonLine>
              <ButtonLine>颜色<Chevron/></ButtonLine>
            </RibbonButton>
            <Gallery>
              {thumbs.map(({id, kind}) => (
                <Thumb key={id} $dark={kind === "dark"}>
                  <ThumbDonut id={id} kind={kind}/>
                </Thumb>
              ))}
              <GalleryScroll>
                <GalleryStep $h={32} $off><Arrow $dir="up" $c="#c8c8c8"/></GalleryStep>
                <GalleryStep $h={30} $off><Arrow $dir="down" $c="#c8c8c8"/></GalleryStep>
                <GalleryStep $h={24}>
                  <svg width="10" height="11" viewBox="0 0 10 11">
                    <path d="M0 1h10" stroke="#666" strokeWidth="1.500"/>
                    <path d="M1 4h8L5 9z" fill="#666"/>
                  </svg>
                </GalleryStep>
              </GalleryScroll>
            </Gallery>
          </GroupBody>
          <GroupLabel>图表样式</GroupLabel>
        </Group>

        <Group $w={190}>
          <GroupBody $pl={13}>
            <RibbonButton $w={83} $muted>
              <IconSlot><SwitchIcon/></IconSlot>
              <ButtonLine>切换行/列</ButtonLine>
            </RibbonButton>
            <RibbonButton $w={83}>
              <IconSlot><SelectDataIcon/></IconSlot>
              <ButtonLine>选择数据</ButtonLine>
            </RibbonButton>
          </GroupBody>
          <GroupLabel>数据</GroupLabel>
        </Group>

        <Group $w={103}>
          <GroupBody>
            <RibbonButton $w={102}>
              <IconSlot><ChangeTypeIcon/></IconSlot>
              <ButtonLine>更改</ButtonLine>
              <ButtonLine>图表类型</ButtonLine>
            </RibbonButton>
          </GroupBody>
          <GroupLabel>类型</GroupLabel>
        </Group>

        <Group $w={102}>
          <GroupBody>
            <RibbonButton $w={101}>
              <IconSlot><MoveChartIcon/></IconSlot>
              <ButtonLine>移动图表</ButtonLine>
            </RibbonButton>
          </GroupBody>
          <GroupLabel>位置</GroupLabel>
        </Group>

        <Collapse>
          <svg width="16" height="9" viewBox="0 0 16 9"><path d="M1 8l7-7 7 7" fill="none" stroke="#555" strokeWidth="1.200"/></svg>
        </Collapse>
      </Ribbon>

      <FormulaBar>
        <InputBox $w={169}>
          <NameText>图表 2</NameText>
          <NameCaret width="8" height="5" viewBox="0 0 8 5"><path d="M0 0h8L4 5z" fill="#666"/></NameCaret>
        </InputBox>
        <Grip><span/><span/><span/></Grip>
        <InputBox $w={164}>
          <FxSlot $w={54}>
            <svg width="18" height="18" viewBox="0 0 18 18"><path d="M2 2l14 14M16 2L2 16" stroke="#c0c0c0" strokeWidth="2.500"/></svg>
          </FxSlot>
          <FxSlot $w={54}>
            <svg width="20" height="18" viewBox="0 0 20 18"><path d="M2 9l6 7L18 2" fill="none" stroke="#c0c0c0" strokeWidth="2.500"/></svg>
          </FxSlot>
          <FxSlot $w={54}><FxLabel>fx</FxLabel></FxSlot>
        </InputBox>
        <InputBox $ml={4}>
          <FormulaText>=SERIES('Pies &amp; Donuts'!$E$4,,'Pies &amp; Donuts'!$H$4:$I$4,2)</FormulaText>
          <FormulaCaret width="12" height="12" viewBox="0 0 12 12"><path d="M1 2l5 5 5-5M3 6l3 4 3-4" fill="none" stroke="#666" strokeWidth="1.800"/></FormulaCaret>
        </InputBox>
      </FormulaBar>

      <Main>
        <SheetColumn>
          <SheetRow>
            <Sheet>
              <Grid>
                <Corner/>
                {columns.map((c) => <ColHead key={c}>{c}</ColHead>)}
                {sheetRows.map((row) => (
                  <React.Fragment key={row}>
                    <RowHead>{row < 24 ? row : ""}</RowHead>
                    <SheetCells row={row}/>
                  </React.Fragment>
                ))}
              </Grid>
              <FloatLabel $y={97}>Population</FloatLabel>
              <FloatLabel $y={125}>Emissions</FloatLabel>
              <PieChart/>
              <SelectedDonut/>
              <ChartTool $y={197}>
                <svg width="22" height="22" viewBox="0 0 22 22"><path d="M8 1h6v7h7v6h-7v7H8v-7H1V8h7z" fill="#7aa696"/></svg>
              </ChartTool>
              <ChartTool $y={254}>
                <svg width="28" height="26" viewBox="0 0 28 26">
                  <path d="M27 1v7l-8 7-2-2 3-4z" fill="#7f7f7f"/>
                  <path d="M16 14l3 3c-1 5-5 8-10 8H1c5-2 5-7 8-10 2-2 5-2 7-1z" fill="#4c7fbd"/>
                  <circle cx="13" cy="19" r="3" fill="#fff" stroke="#4c7fbd"/>
                </svg>
              </ChartTool>
              <ChartTool $y={311}>
                <svg width="30" height="28" viewBox="0 0 30 28">
                  <path d="M1 1h28L18 13v14h-6V13z" fill="#7f7f7f"/>
                  <path d="M6 6l8 8v12" fill="none" stroke="#fff" strokeWidth="1.200"/>
                </svg>
              </ChartTool>
              <UsaDonut/>
            </Sheet>
            <VScroll $w={25} $ml={2}>
              <ScrollBtn><Arrow $dir="up"/></ScrollBtn>
              <ScrollThumb $h={216} $mt={12}/>
              <Spacer/>
              <ScrollBtn><Arrow $dir="down"/></ScrollBtn>
            </VScroll>
          </SheetRow>

          <TabStrip>
            <SheetNav>
              <Arrow $dir="left" $c="#c0c0c0"/>
              <Arrow $dir="right" $c={GREEN}/>
            </SheetNav>
            <SheetTab $w={134} $ml={2} $bg="#92c322" $fg="#111">Techniques</SheetTab>
            <SheetTab $w={167} $ml={3} $active $bg="linear-gradient(#fff 55%, #f6e3a8)" $fg={GREEN}>Pies &amp; Donuts</SheetTab>
            <SheetTab $w={139} $ml={2} $bg="#0070c0" $fg="#fff">Line &amp; Area</SheetTab>
            <SheetTab $w={190} $ml={5} $bg="#c5301a" $fg="#fff">Scatter &amp; Bubble</SheetTab>
            <SheetTab $w={48} $ml={5} $pl={9} $bg="#55a120" $fg="#111">Hist</SheetTab>
            <More>...</More>
            <AddSheet>+</AddSheet>
            <StripGrip><span/><span/><span/></StripGrip>
            <HScroll>
              <HBtn><Arrow $dir="left"/></HBtn>
              <HThumb/>
              <Spacer/>
              <HBtn><Arrow $dir="right"/></HBtn>
            </HScroll>
          </TabStrip>
        </SheetColumn>

        <Pane>
          <PaneHead>
            <PaneTitle>设置数据点格式</PaneTitle>
            <Arrow $dir="down" $big/>
            <PaneClose>
              <svg width="14" height="14" viewBox="0 0 14 14"><path d="M1 1l12 12M13 1L1 13" stroke="#666" strokeWidth="2.500"/></svg>
            </PaneClose>
          </PaneHead>
          <SeriesRow>系列选项<Arrow $dir="down" $big/></SeriesRow>
          <PaneIcons>
            <PaneIcon $on $w={44}><BucketIcon/></PaneIcon>
            <PaneIcon $w={64}><PentagonIcon/></PaneIcon>
            <PaneIcon $w={42}><BarsIcon/></PaneIcon>
          </PaneIcons>
          <PaneRule/>
          <PaneBody>
            <Options>
              <Section>填充</Section>
              <OptionList>
                {fillOptions.map(([label, key, on]) => (
                  <Option key={label}><Radio $on={on}/><span>{label}(<u>{key}</u>)</span></Option>
                ))}
                <Option>
                  <Check>
                    <svg width="14" height="12" viewBox="0 0 14 12"><path d="M1 6l4 4 8-9" fill="none" stroke="#7a7a7a" strokeWidth="2.200"/></svg>
                  </Check>
                  <span>按扇区着色(<u>V</u>)</span>
                </Option>
              </OptionList>
              <Section $mt={23}>边框</Section>
              <OptionList>
                {lineOptions.map(([label, key]) => (
                  <Option key={label}><Radio/><span>{label}(<u>{key}</u>)</span></Option>
                ))}
              </OptionList>
            </Options>
            <VScroll $w={25}>
              <ScrollBtn><Arrow $dir="up"/></ScrollBtn>
              <ScrollThumb $h={194} $mt={0}/>
              <Spacer/>
              <ScrollBtn><Arrow $dir="down"/></ScrollBtn>
            </VScroll>
          </PaneBody>
        </Pane>
      </Main>

      <StatusBar>
        就绪
        <StatusIcon>
          <svg width="20" height="24" viewBox="0 0 20 24">
            <rect x="2" y="5" width="16" height="18" fill="#fff" stroke="#777"/>
            <circle cx="6" cy="5" r="4.500" fill="#666"/>
            <path d="M5 12h10M5 15h10M5 18h10M9 10v11M13 10v11" stroke="#888" strokeDasharray="1.500 1"/>
          </svg>
        </StatusIcon>
        <Stat $ml={1093}>平均值: 1</Stat>
        <Stat $ml={24}>计数: 60</Stat>
        <Stat $ml={23}>求和: 60</Stat>
        <ViewGroup>
          <ViewBtn $on>
            <svg width="20" height="20" viewBox="0 0 20 20"><path d="M.5.500h19v19H.5zM.5 6.500h19M.5 13h19M6.500.500v19M13 .500v19" fill="none" stroke="#777"/></svg>
          </ViewBtn>
          <ViewBtn>
            <svg width="20" height="20" viewBox="0 0 20 20"><path d="M.5.500h19v19H.5z" fill="none" stroke="#666"/><path d="M4.500 4h11v12h-11zM7 7.500h6M7 10h6M7 12.500h6" fill="none" stroke="#666"/></svg>
          </ViewBtn>
          <ViewBtn>
            <svg width="20" height="20" viewBox="0 0 20 20"><path d="M.5.500h19v19H.5zM.5 10.500h14V.500M7 .500v10" fill="none" stroke="#666"/></svg>
          </ViewBtn>
          <ZoomDash $w={11} $ml={9}/>
          <ZoomDash $w={21} $ml={9}/>
        </ViewGroup>
      </StatusBar>

      <Ime>
        <SogouLogo>S</SogouLogo>
        <ImeZh>中</ImeZh>
        <ImePunct>°,</ImePunct>
        <ImeIcon $w={34}>
          <svg width="18" height="24" viewBox="0 0 18 24">
            <rect x="5" y="0" width="8" height="15" rx="4" fill="#0f74d8"/>
            <path d="M1 10c0 5 3 8 8 8s8-3 8-8M9 18v3M5 23h8" fill="none" stroke="#0f74d8" strokeWidth="2"/>
          </svg>
        </ImeIcon>
        <ImeIcon $w={37}>
          <svg width="23" height="19" viewBox="0 0 23 19">
            <rect x="1" y="1" width="21" height="17" rx="2.500" fill="none" stroke="#0f74d8" strokeWidth="2"/>
            <path d="M4 6h15M4 10h15M7 14h9" stroke="#0f74d8" strokeWidth="2.500" strokeDasharray="2.500 1.500"/>
          </svg>
        </ImeIcon>
        <ImeIcon $w={20}>
          <svg width="20" height="20" viewBox="0 0 20 20">
            <rect x="0" y="0" width="9" height="9" rx="2.500" fill="#5a6ff0"/>
            <rect x="11" y="0" width="9" height="9" rx="2.500" fill="none" stroke="#5a6ff0" strokeWidth="2"/>
            <rect x="0" y="11" width="9" height="9" rx="2.500" fill="#b65c90"/>
            <rect x="11" y="11" width="9" height="9" rx="2.500" fill="#8f66c0"/>
          </svg>
        </ImeIcon>
      </Ime>

      <Annotation viewBox="0 0 1920 1020">
        <path d="M1047 719L1096 687 1093 682 1113 683 1102 700 1100 693z" fill="#ff2a1a"/>
        <path d="M1488 627L1523 566 1516 565 1535 558 1532 577 1529 572z" fill="#ff2a1a"/>
      </Annotation>
    </Window>
  );
}
